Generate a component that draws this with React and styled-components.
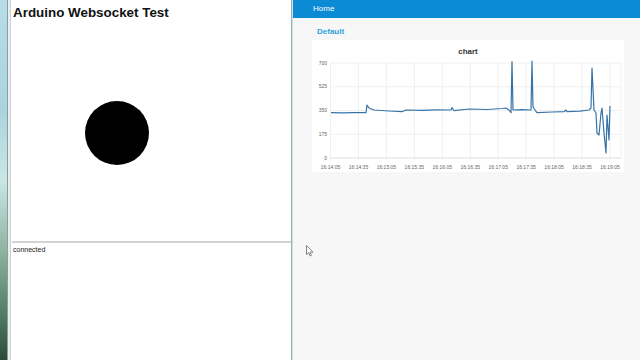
import React from 'react';
import styled, { createGlobalStyle } from 'styled-components';

const GlobalStyle = createGlobalStyle`
  html, body {
    margin: 0;
    padding: 0;
    overflow: hidden;
    background: #f6f6f6;
    font-family: "Liberation Sans", Arial, sans-serif;
  }
`

const Screen = styled.div`
  display: flex;
  flex-direction: row;
  width: 640px;
  height: 360px;
  overflow: hidden;
`

const DesktopStrip = styled.div`
  width: 7px;
  flex: none;
  background: linear-gradient(180deg, #b6dde8 0%, #a9d4de 30%, #c9e6e4 50%, #8db39f 70%, #4f7a62 88%, #2c4a37 100%);
`

const DemoWindow = styled.div`
  display: flex;
  width: 285px;
  flex: none;
  border-left: 1px solid #8f9b9d;
  border-right: 1px solid #a3adaf;
  padding-left: 2px;
  background: #e8eef0;
  box-sizing: border-box;
`

const DemoPage = styled.div`
  flex: 1;
  display: flex;
  flex-direction: column;
  background: #fff;
  border-left: 1px solid #cdd1d2;
`

const Title = styled.h1`
  margin: 0;
  padding: 5px 0 0 2px;
  height: 20px;
  box-sizing: border-box;
  font-size: 13.4px;
  line-height: 16px;
  font-weight: bold;
  color: #111;
`

const CanvasArea = styled.div`
  height: 221px;
  display: flex;
  align-items: flex-start;
`

const Led = styled.div`
  width: 64px;
  height: 64px;
  border-radius: 50%;
  background: #000;
  margin: 81px 0 0 74px;
`

const Rule = styled.div`
  height: 2px;
  background: #d3d3d3;
  margin-left: 1px;
`

const Log = styled.div`
  padding: 2px 0 0 2px;
  font-size: 7px;
  line-height: 9px;
  color: #222;
`

const Dashboard = styled.div`
  position: relative;
  flex: 1;
  display: flex;
  flex-direction: column;
  background: #f7f7f7;
  border-left: 1px solid #c6e3ea;
`

const Toolbar = styled.div`
  height: 18px;
  background: #0b8bd4;
  color: #fff;
  font-size: 8px;
  line-height: 17px;
  padding-left: 20px;
`

const GroupLabel = styled.div`
  height: 22px;
  padding: 9px 0 0 24px;
  box-sizing: border-box;
  font-size: 8px;
  font-weight: bold;
  color: #2ea3d8;
`

const Card = styled.div`
  margin-left: 19px;
  width: 312px;
  height: 132px;
  background: #fff;
  display: flex;
  flex-direction: column;
`

const ChartTitle = styled.div`
  height: 18px;
  padding-top: 7px;
  box-sizing: border-box;
  font-size: 8px;
  line-height: 10px;
  font-weight: bold;
  text-align: center;
  color: #333;
`

const Pointer = styled.svg`
  position: absolute;
  left: 13px;
  top: 245px;
`

const yTicks = [700, 525, 350, 175, 0];
const xLabels = ['16:14:05', '16:14:35', '16:15:05', '16:15:35', '16:16:05', '16:16:35', '16:17:05', '16:17:35', '16:18:05', '16:18:35', '16:19:05'];

const points = [
  [19, 54.7], [30, 54.9], [42, 54.6], [54, 54.7], [55, 47], [57, 50], [62, 52], [77, 53], [90, 53.7], [94, 52],
  [110, 52.3], [125, 51.8], [139, 52], [140, 49.5], [142, 52.7], [157, 51], [175, 51.5], [190, 50.5], [194, 50],
  [197, 52], [199, 54.7], [200, 3.7], [201, 52], [210, 51.6], [219, 52], [220, 3], [221, 48.7], [223, 52],
  [225, 54.7], [240, 54], [252, 53.7], [254, 52], [255, 53.7], [268, 53.2], [277, 52], [279, 50], [280, 10],
  [282, 52], [284, 55], [285, 75], [287, 77], [289, 55], [290, 50], [292, 75], [294, 95], [295, 57], [297, 82], [298, 48]
];

function Chart() {
  const yOf = v => 100 - (v / 700) * 95;
  const xOf = i => 18.5 + 27.95 * i;
  return (
    <svg width="312" height="114" viewBox="0 0 312 114">
      {yTicks.map(v => (
        <g key={v}>
          <line x1="18" x2="309" y1={yOf(v)} y2={yOf(v)} stroke={v === 0 ? '#d4d4d4' : '#ececec'} strokeWidth="0.8" />
          <text x="15" y={yOf(v) + 1.7} fontSize="5" fill="#666" textAnchor="end" fontFamily="Liberation Sans, Arial, sans-serif">{v}</text>
        </g>
      ))}
      {xLabels.map((t, i) => (
        <g key={t}>
          <line x1={xOf(i)} x2={xOf(i)} y1="5" y2="102" stroke="#ececec" strokeWidth="0.8" />
          <text x={xOf(i)} y="110.5" fontSize="5" fill="#666" textAnchor="middle" fontFamily="Liberation Sans, Arial, sans-serif">{t}</text>
        </g>
      ))}
      <line x1="309" x2="309" y1="5" y2="100" stroke="#ececec" strokeWidth="0.8" />
      <polyline
        points={points.map(p => p.join(',')).join(' ')}
        fill="none"
        stroke="#3674a8"
        strokeWidth="1.2"
        strokeLinejoin="round"
      />
    </svg>
  );
}

export default function App() {
  return (
    <Screen>
      <GlobalStyle />
      <DesktopStrip />
      <DemoWindow>
        <DemoPage>
          <Title>Arduino Websocket Test</Title>
          <CanvasArea>
            <Led />
          </CanvasArea>
          <Rule />
          <Log>connected</Log>
        </DemoPage>
      </DemoWindow>
      <Dashboard>
        <Toolbar>Home</Toolbar>
        <GroupLabel>Default</GroupLabel>
        <Card>
          <ChartTitle>chart</ChartTitle>
          <Chart />
        </Card>
        <Pointer width="8" height="12" viewBox="0 0 8 12">
          <path d="M0.5 0.5 L0.5 9.5 L2.6 7.6 L4 11 L5.4 10.4 L4 7.2 L7 7.2 Z" fill="#fff" stroke="#666" strokeWidth="0.8" strokeLinejoin="round" />
        </Pointer>
      </Dashboard>
    </Screen>
  );
}
